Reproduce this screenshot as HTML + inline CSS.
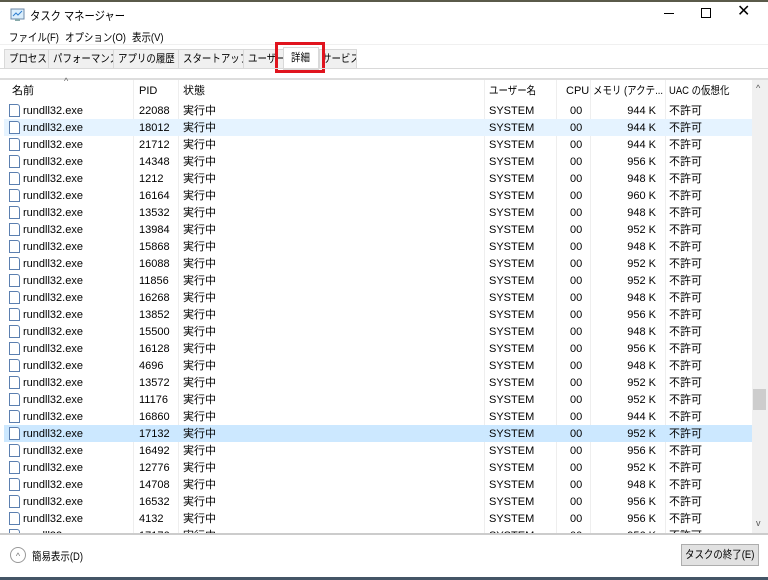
<!DOCTYPE html><html><head><meta charset="utf-8"><style>
*{margin:0;padding:0;box-sizing:border-box}
body{width:768px;height:580px;overflow:hidden;background:#fff;font-family:"Liberation Sans","Noto Sans CJK JP",sans-serif;font-size:11px;color:#000;position:relative}
.a{position:absolute;white-space:nowrap}
.sx{display:inline-block;transform:scaleX(0.86);transform-origin:left center;white-space:nowrap}
.tab{position:absolute;top:49px;height:20px;border:1px solid #d9d9d9;border-right:none;background:#f0f0f0;line-height:18px;font-size:11px;overflow:hidden;white-space:nowrap;padding-left:4px}
.row{position:absolute;left:4px;width:748px;height:17px;line-height:18px;white-space:nowrap}
.row>span{position:absolute}
.row .sx{position:static}
.c1{left:19px}.c2{left:135px}.c3{left:179px}.c4{left:485px}.c5{left:566px}.c6{right:96px}.c7{left:665px}
.ic{left:5px;top:2px;width:11px;height:13px;border:1px solid #5b7fb0;background:#fff;border-radius:0 3px 0 0}
.vl{position:absolute;top:80px;height:453px;width:1px;background:#eee}
</style></head><body>
<div class="a" style="left:0;top:0;width:768px;height:2px;background:#5a5a4a"></div>
<svg class="a" style="left:10px;top:8px" width="16" height="14"><rect x="1" y="1" width="13" height="10" fill="#dbeefc" stroke="#6d8aa8"/><polyline points="3,8 6,5 8,7 12,3" fill="none" stroke="#2f7fd0"/><rect x="5" y="11" width="5" height="2" fill="#8aa"/></svg>
<div class="a" style="left:30px;top:7px;font-size:12px"><span class="sx">タスク マネージャー</span></div>
<div class="a" style="left:664px;top:13px;width:10px;height:1px;background:#000"></div>
<div class="a" style="left:701px;top:8px;width:10px;height:10px;border:1px solid #000"></div>
<div class="a" style="left:737px;top:1px;font-size:16px">✕</div>
<div class="a" style="left:9px;top:29px"><span class="sx">ファイル(F)</span></div>
<div class="a" style="left:65px;top:29px"><span class="sx">オプション(O)</span></div>
<div class="a" style="left:132px;top:29px"><span class="sx">表示(V)</span></div>
<div class="a" style="left:0;top:44px;width:768px;height:1px;background:#f0f0f0"></div>
<div class="tab" style="left:4px;width:44px"><span class="sx">プロセス</span></div>
<div class="tab" style="left:48px;width:65px"><span class="sx">パフォーマンス</span></div>
<div class="tab" style="left:113px;width:65px"><span class="sx">アプリの履歴</span></div>
<div class="tab" style="left:178px;width:65px"><span class="sx">スタートアップ</span></div>
<div class="tab" style="left:243px;width:40px"><span class="sx">ユーザー</span></div>
<div class="tab" style="left:319px;width:38px;border-right:1px solid #d9d9d9;padding-left:2px"><span class="sx">サービス</span></div>
<div class="tab" style="left:283px;top:47px;width:36px;height:23px;background:#fff;border-right:1px solid #d9d9d9;padding-left:7px;line-height:21px"><span class="sx">詳細</span></div>
<div class="a" style="left:275px;top:42px;width:50px;height:31px;border:3px solid #e0141e"></div>
<div class="a" style="left:0;top:68px;width:768px;height:1px;background:#d9d9d9"></div>
<div class="a" style="left:0;top:78px;width:768px;height:2px;background:#ddd"></div>
<div class="a" style="left:64px;top:76px;font-size:9px;color:#666">^</div>
<div class="vl" style="left:133px"></div><div class="vl" style="left:178px"></div><div class="vl" style="left:484px"></div><div class="vl" style="left:556px"></div><div class="vl" style="left:590px"></div><div class="vl" style="left:665px"></div>
<div class="row" style="top:82px;height:18px"><span style="left:8px">名前</span><span class="c2">PID</span><span class="c3">状態</span><span class="c4"><span class="sx">ユーザー名</span></span><span style="left:562px">CPU</span><span style="left:589px"><span class="sx">メモリ (アクテ...</span></span><span style="left:665px"><span class="sx">UAC の仮想化</span></span></div>
<div class="a" style="left:752px;top:80px;width:16px;height:453px;background:#f0f0f0"></div>
<div class="a" style="left:756px;top:83px;font-size:9px;color:#555">^</div>
<div class="a" style="left:756px;top:518px;font-size:9px;color:#555">v</div>
<div class="a" style="left:753px;top:389px;width:13px;height:21px;background:#cdcdcd"></div>
<div class="a" style="left:0;top:80px;width:768px;height:453px;overflow:hidden;pointer-events:none">
<div style="position:relative;top:-80px">
<div class="row" style="top:102px"><span class="ic"></span><span class="c1">rundll32.exe</span><span class="c2">22088</span><span class="c3">実行中</span><span class="c4">SYSTEM</span><span class="c5">00</span><span class="c6">944 K</span><span class="c7">不許可</span></div>
<div class="row" style="top:119px;background:#e5f3ff"><span class="ic"></span><span class="c1">rundll32.exe</span><span class="c2">18012</span><span class="c3">実行中</span><span class="c4">SYSTEM</span><span class="c5">00</span><span class="c6">944 K</span><span class="c7">不許可</span></div>
<div class="row" style="top:136px"><span class="ic"></span><span class="c1">rundll32.exe</span><span class="c2">21712</span><span class="c3">実行中</span><span class="c4">SYSTEM</span><span class="c5">00</span><span class="c6">944 K</span><span class="c7">不許可</span></div>
<div class="row" style="top:153px"><span class="ic"></span><span class="c1">rundll32.exe</span><span class="c2">14348</span><span class="c3">実行中</span><span class="c4">SYSTEM</span><span class="c5">00</span><span class="c6">956 K</span><span class="c7">不許可</span></div>
<div class="row" style="top:170px"><span class="ic"></span><span class="c1">rundll32.exe</span><span class="c2">1212</span><span class="c3">実行中</span><span class="c4">SYSTEM</span><span class="c5">00</span><span class="c6">948 K</span><span class="c7">不許可</span></div>
<div class="row" style="top:187px"><span class="ic"></span><span class="c1">rundll32.exe</span><span class="c2">16164</span><span class="c3">実行中</span><span class="c4">SYSTEM</span><span class="c5">00</span><span class="c6">960 K</span><span class="c7">不許可</span></div>
<div class="row" style="top:204px"><span class="ic"></span><span class="c1">rundll32.exe</span><span class="c2">13532</span><span class="c3">実行中</span><span class="c4">SYSTEM</span><span class="c5">00</span><span class="c6">948 K</span><span class="c7">不許可</span></div>
<div class="row" style="top:221px"><span class="ic"></span><span class="c1">rundll32.exe</span><span class="c2">13984</span><span class="c3">実行中</span><span class="c4">SYSTEM</span><span class="c5">00</span><span class="c6">952 K</span><span class="c7">不許可</span></div>
<div class="row" style="top:238px"><span class="ic"></span><span class="c1">rundll32.exe</span><span class="c2">15868</span><span class="c3">実行中</span><span class="c4">SYSTEM</span><span class="c5">00</span><span class="c6">948 K</span><span class="c7">不許可</span></div>
<div class="row" style="top:255px"><span class="ic"></span><span class="c1">rundll32.exe</span><span class="c2">16088</span><span class="c3">実行中</span><span class="c4">SYSTEM</span><span class="c5">00</span><span class="c6">952 K</span><span class="c7">不許可</span></div>
<div class="row" style="top:272px"><span class="ic"></span><span class="c1">rundll32.exe</span><span class="c2">11856</span><span class="c3">実行中</span><span class="c4">SYSTEM</span><span class="c5">00</span><span class="c6">952 K</span><span class="c7">不許可</span></div>
<div class="row" style="top:289px"><span class="ic"></span><span class="c1">rundll32.exe</span><span class="c2">16268</span><span class="c3">実行中</span><span class="c4">SYSTEM</span><span class="c5">00</span><span class="c6">948 K</span><span class="c7">不許可</span></div>
<div class="row" style="top:306px"><span class="ic"></span><span class="c1">rundll32.exe</span><span class="c2">13852</span><span class="c3">実行中</span><span class="c4">SYSTEM</span><span class="c5">00</span><span class="c6">956 K</span><span class="c7">不許可</span></div>
<div class="row" style="top:323px"><span class="ic"></span><span class="c1">rundll32.exe</span><span class="c2">15500</span><span class="c3">実行中</span><span class="c4">SYSTEM</span><span class="c5">00</span><span class="c6">948 K</span><span class="c7">不許可</span></div>
<div class="row" style="top:340px"><span class="ic"></span><span class="c1">rundll32.exe</span><span class="c2">16128</span><span class="c3">実行中</span><span class="c4">SYSTEM</span><span class="c5">00</span><span class="c6">956 K</span><span class="c7">不許可</span></div>
<div class="row" style="top:357px"><span class="ic"></span><span class="c1">rundll32.exe</span><span class="c2">4696</span><span class="c3">実行中</span><span class="c4">SYSTEM</span><span class="c5">00</span><span class="c6">948 K</span><span class="c7">不許可</span></div>
<div class="row" style="top:374px"><span class="ic"></span><span class="c1">rundll32.exe</span><span class="c2">13572</span><span class="c3">実行中</span><span class="c4">SYSTEM</span><span class="c5">00</span><span class="c6">952 K</span><span class="c7">不許可</span></div>
<div class="row" style="top:391px"><span class="ic"></span><span class="c1">rundll32.exe</span><span class="c2">11176</span><span class="c3">実行中</span><span class="c4">SYSTEM</span><span class="c5">00</span><span class="c6">952 K</span><span class="c7">不許可</span></div>
<div class="row" style="top:408px"><span class="ic"></span><span class="c1">rundll32.exe</span><span class="c2">16860</span><span class="c3">実行中</span><span class="c4">SYSTEM</span><span class="c5">00</span><span class="c6">944 K</span><span class="c7">不許可</span></div>
<div class="row" style="top:425px;background:#cce8ff"><span class="ic"></span><span class="c1">rundll32.exe</span><span class="c2">17132</span><span class="c3">実行中</span><span class="c4">SYSTEM</span><span class="c5">00</span><span class="c6">952 K</span><span class="c7">不許可</span></div>
<div class="row" style="top:442px"><span class="ic"></span><span class="c1">rundll32.exe</span><span class="c2">16492</span><span class="c3">実行中</span><span class="c4">SYSTEM</span><span class="c5">00</span><span class="c6">956 K</span><span class="c7">不許可</span></div>
<div class="row" style="top:459px"><span class="ic"></span><span class="c1">rundll32.exe</span><span class="c2">12776</span><span class="c3">実行中</span><span class="c4">SYSTEM</span><span class="c5">00</span><span class="c6">952 K</span><span class="c7">不許可</span></div>
<div class="row" style="top:476px"><span class="ic"></span><span class="c1">rundll32.exe</span><span class="c2">14708</span><span class="c3">実行中</span><span class="c4">SYSTEM</span><span class="c5">00</span><span class="c6">948 K</span><span class="c7">不許可</span></div>
<div class="row" style="top:493px"><span class="ic"></span><span class="c1">rundll32.exe</span><span class="c2">16532</span><span class="c3">実行中</span><span class="c4">SYSTEM</span><span class="c5">00</span><span class="c6">956 K</span><span class="c7">不許可</span></div>
<div class="row" style="top:510px"><span class="ic"></span><span class="c1">rundll32.exe</span><span class="c2">4132</span><span class="c3">実行中</span><span class="c4">SYSTEM</span><span class="c5">00</span><span class="c6">956 K</span><span class="c7">不許可</span></div>
<div class="row" style="top:527px"><span class="ic"></span><span class="c1">rundll32.exe</span><span class="c2">17176</span><span class="c3">実行中</span><span class="c4">SYSTEM</span><span class="c5">00</span><span class="c6">956 K</span><span class="c7">不許可</span></div>
</div></div>
<div class="a" style="left:0;top:533px;width:768px;height:2px;background:#ccc"></div>
<div class="a" style="left:10px;top:547px;width:16px;height:16px;border:1px solid #999;border-radius:50%;font-size:9px;color:#777;text-align:center;line-height:16px">^</div>
<div class="a" style="left:32px;top:548px"><span class="sx">簡易表示(D)</span></div>
<div class="a" style="left:681px;top:544px;width:78px;height:22px;border:1px solid #adadad;background:#e1e1e1;line-height:20px;font-size:11px;padding-left:3px;overflow:hidden"><span class="sx">タスクの終了(E)</span></div>
<div class="a" style="left:0;top:577px;width:768px;height:3px;background:#445566"></div>
</body></html>
